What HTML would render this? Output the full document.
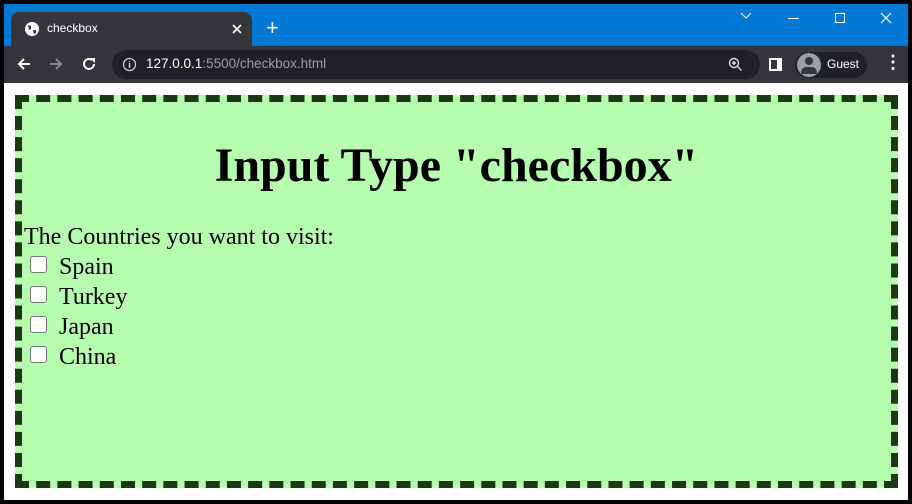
<!DOCTYPE html>
<html><head><style>
*{margin:0;padding:0;box-sizing:border-box}
body{width:912px;height:504px;background:#000;position:relative;overflow:hidden;font-family:"Liberation Sans",sans-serif}
.tabbar{position:absolute;left:4px;top:4px;width:904px;height:42px;background:#0078d4}
.tab{position:absolute;left:11px;top:12px;width:241px;height:34px;background:#35363a;border-radius:8px 8px 0 0;color:#fff;font-size:12px}
.toolbar{position:absolute;left:4px;top:46px;width:904px;height:37px;background:#35363a}
.omni{position:absolute;left:112px;top:50px;width:648px;height:29px;background:#202124;border-radius:15px;color:#fff;font-size:13.5px}
.page{position:absolute;left:4px;top:83px;width:904px;height:417px;background:#fff}
.box{position:absolute;left:15px;top:95px;width:883px;height:393px;border:7px dashed #1a3a14;background:#b7fdb0;font-family:"Liberation Serif",serif;color:#000}
h1{position:absolute;left:0;right:0;top:36px;text-align:center;font-size:48px;font-weight:bold}
.t{position:absolute;left:2px;font-size:24px}
.cb{position:absolute;left:8px;width:17px;height:17px;border:1.5px solid #767676;border-radius:3px;background:#fff}
.w{color:#fff;position:absolute}
</style></head><body>
<div class="tabbar"></div>
<div class="tab">
<svg style="position:absolute;left:13px;top:9px" width="16" height="16" viewBox="0 0 16 16"><circle cx="8" cy="8" r="7" fill="#fff"/><path d="M4 4l3 1 0 3-2 1zM9 9l3 0 0 3-2 1z" fill="#35363a"/></svg>
<span style="position:absolute;left:36px;top:9px">checkbox</span>
<svg style="position:absolute;left:221px;top:12px" width="10" height="10"><path d="M1 1l8 8M9 1l-8 8" stroke="#fff" stroke-width="1.6"/></svg></div>
<span class="w" style="left:266px;top:15px;font-size:22px">+</span>
<svg class="w" style="left:740px;top:12px" width="12" height="8"><path d="M1 1l5 5 5-5" stroke="#fff" fill="none"/></svg>
<div style="position:absolute;left:788px;top:18px;width:11px;height:1px;background:#fff"></div>
<div style="position:absolute;left:835px;top:13px;width:10px;height:10px;border:1px solid #fff"></div>
<svg style="position:absolute;left:880px;top:12px" width="12" height="12"><path d="M1 1l10 10M11 1L1 11" stroke="#fff" stroke-width="1.2"/></svg>
<div class="toolbar"></div>
<svg style="position:absolute;left:16px;top:56px" width="16" height="16"><path d="M14 8H3M8 3L3 8l5 5" stroke="#fff" stroke-width="2" fill="none"/></svg>
<svg style="position:absolute;left:48px;top:56px" width="16" height="16"><path d="M2 8h11M8 3l5 5-5 5" stroke="#888" stroke-width="2" fill="none"/></svg>
<svg style="position:absolute;left:81px;top:56px" width="16" height="16"><path d="M13 8a5 5 0 1 1-2-4" stroke="#fff" stroke-width="2" fill="none"/><path d="M9 2h5v5z" fill="#fff"/></svg>
<div class="omni">
<svg style="position:absolute;left:10px;top:7px" width="15" height="15"><circle cx="7.5" cy="7.5" r="6" stroke="#ccc" fill="none" stroke-width="1.3"/><path d="M7.5 6v5M7.5 4v1" stroke="#ccc" stroke-width="1.5"/></svg>
<span style="position:absolute;left:34px;top:6px">127.0.0.1<span style="color:#9aa0a6">:5500/checkbox.html</span></span>
<svg style="position:absolute;left:616px;top:7px" width="15" height="15"><circle cx="6" cy="6" r="4.5" stroke="#ddd" fill="none" stroke-width="1.4"/><path d="M9.5 9.5l4 4M6 4v4M4 6h4" stroke="#ddd" stroke-width="1.4"/></svg>
</div>
<div style="position:absolute;left:769px;top:58px;width:13px;height:13px;border:2px solid #fff;border-right-width:5px"></div>
<div style="position:absolute;left:795px;top:52px;width:72px;height:26px;background:#202124;border-radius:13px"></div>
<div style="position:absolute;left:797px;top:53px;width:24px;height:24px;border-radius:50%;background:#9aa0a6"></div>
<div style="position:absolute;left:805px;top:57px;width:8px;height:8px;border-radius:50%;background:#35363a"></div>
<div style="position:absolute;left:801px;top:67px;width:16px;height:7px;border-radius:8px 8px 2px 2px;background:#35363a"></div>
<span class="w" style="left:827px;top:57px;font-size:12px">Guest</span>
<span class="w" style="left:884px;top:52px;font-size:18px;font-weight:bold">⋮</span>
<div class="page"></div>
<div class="box">
<h1>Input Type "checkbox"</h1>
<div class="t" style="top:122px">The Countries you want to visit:</div>
<div class="cb" style="top:154px"></div><div class="t" style="left:37px;top:152px">Spain</div>
<div class="cb" style="top:184px"></div><div class="t" style="left:37px;top:182px">Turkey</div>
<div class="cb" style="top:214px"></div><div class="t" style="left:37px;top:212px">Japan</div>
<div class="cb" style="top:244px"></div><div class="t" style="left:37px;top:242px">China</div>
</div>
</body></html>
